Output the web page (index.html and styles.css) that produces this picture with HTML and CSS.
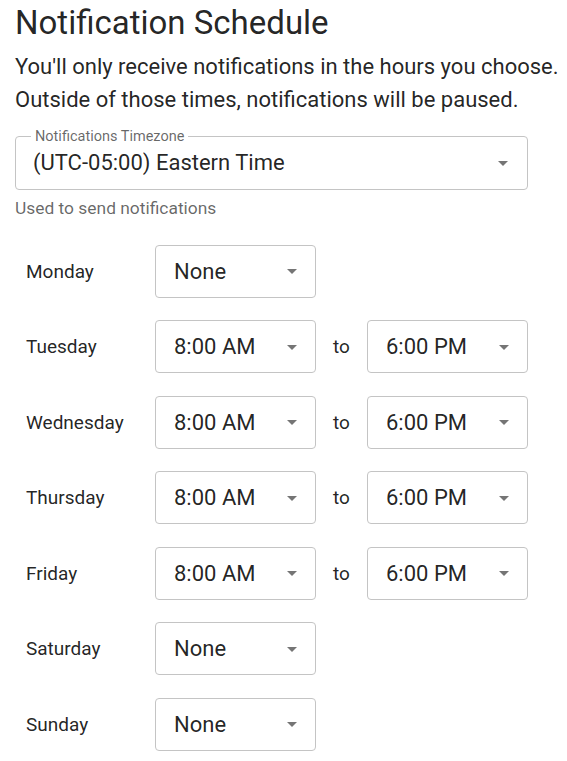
FILE: index.html
```html
<!DOCTYPE html>
<html lang="en">
<head>
<meta charset="utf-8">
<title>Notification Schedule</title>
<link rel="stylesheet" href="styles.css">
</head>
<body>
<div class="page">
  <h1 class="title">Notification Schedule</h1>
  <p class="intro">You'll only receive notifications in the hours you choose.<br>Outside of those times, notifications will be paused.</p>

  <fieldset class="tz">
    <legend class="tz-label">Notifications Timezone</legend>
    <div class="tz-row">
      <span class="value">(UTC-05:00) Eastern Time</span>
      <svg class="arrow" viewBox="0 0 24 24"><path d="M7 10l5 5 5-5z"/></svg>
    </div>
  </fieldset>
  <div class="helper">Used to send notifications</div>

  <div class="schedule">
    <div class="day">Monday</div>
    <div class="select"><span class="value">None</span><svg class="arrow" viewBox="0 0 24 24"><path d="M7 10l5 5 5-5z"/></svg></div>
    <div></div><div></div>

    <div class="day">Tuesday</div>
    <div class="select"><span class="value">8:00 AM</span><svg class="arrow" viewBox="0 0 24 24"><path d="M7 10l5 5 5-5z"/></svg></div>
    <div class="to">to</div>
    <div class="select"><span class="value">6:00 PM</span><svg class="arrow" viewBox="0 0 24 24"><path d="M7 10l5 5 5-5z"/></svg></div>

    <div class="day">Wednesday</div>
    <div class="select"><span class="value">8:00 AM</span><svg class="arrow" viewBox="0 0 24 24"><path d="M7 10l5 5 5-5z"/></svg></div>
    <div class="to">to</div>
    <div class="select"><span class="value">6:00 PM</span><svg class="arrow" viewBox="0 0 24 24"><path d="M7 10l5 5 5-5z"/></svg></div>

    <div class="day">Thursday</div>
    <div class="select"><span class="value">8:00 AM</span><svg class="arrow" viewBox="0 0 24 24"><path d="M7 10l5 5 5-5z"/></svg></div>
    <div class="to">to</div>
    <div class="select"><span class="value">6:00 PM</span><svg class="arrow" viewBox="0 0 24 24"><path d="M7 10l5 5 5-5z"/></svg></div>

    <div class="day">Friday</div>
    <div class="select"><span class="value">8:00 AM</span><svg class="arrow" viewBox="0 0 24 24"><path d="M7 10l5 5 5-5z"/></svg></div>
    <div class="to">to</div>
    <div class="select"><span class="value">6:00 PM</span><svg class="arrow" viewBox="0 0 24 24"><path d="M7 10l5 5 5-5z"/></svg></div>

    <div class="day">Saturday</div>
    <div class="select"><span class="value">None</span><svg class="arrow" viewBox="0 0 24 24"><path d="M7 10l5 5 5-5z"/></svg></div>
    <div></div><div></div>

    <div class="day">Sunday</div>
    <div class="select"><span class="value">None</span><svg class="arrow" viewBox="0 0 24 24"><path d="M7 10l5 5 5-5z"/></svg></div>
    <div></div><div></div>
  </div>
</div>
</body>
</html>
```

FILE: styles.css
```css
html, body {
  margin: 0;
  padding: 0;
  background: #ffffff;
}

body {
  font-family: Roboto, "Liberation Sans", sans-serif;
  color: rgba(0, 0, 0, 0.87);
}

.page {
  padding: 0 0 0 15px;
}

.title {
  font-size: 33px;
  font-weight: 400;
  line-height: 40px;
  margin: 3px 0 0 0;
}

.intro {
  font-size: 22px;
  line-height: 32.5px;
  margin: 8px 0 0 0;
  white-space: nowrap;
}

.tz {
  width: 513px;
  margin: 13.5px 0 0 0;
  padding: 0 12px 0 17px;
  border: 1px solid #c4c4c4;
  border-radius: 4px;
  height: 60px;
  box-sizing: border-box;
  min-width: 0;
}

.tz-label {
  font-size: 14.5px;
  line-height: 14px;
  color: rgba(0, 0, 0, 0.6);
  padding: 0 4px;
  margin-left: -2px;
}

.tz-row {
  display: flex;
  align-items: center;
  justify-content: space-between;
  height: 38px;
}

.value {
  font-size: 22px;
}

.arrow {
  width: 24px;
  height: 24px;
  fill: rgba(0, 0, 0, 0.54);
  flex: none;
}

.helper {
  font-size: 17.4px;
  line-height: 20px;
  color: rgba(0, 0, 0, 0.6);
  margin-top: 8px;
}

.schedule {
  display: grid;
  grid-template-columns: 140px 161px 51px 161px;
  grid-auto-rows: 53px;
  row-gap: 22.5px;
  align-items: center;
  margin-top: 27px;
}

.day {
  font-size: 19px;
  padding-left: 11px;
}

.to {
  font-size: 19px;
  text-align: center;
}

.select {
  height: 53px;
  box-sizing: border-box;
  border: 1px solid #c4c4c4;
  border-radius: 4px;
  display: flex;
  align-items: center;
  justify-content: space-between;
  padding: 0 11px 0 18px;
}
```
